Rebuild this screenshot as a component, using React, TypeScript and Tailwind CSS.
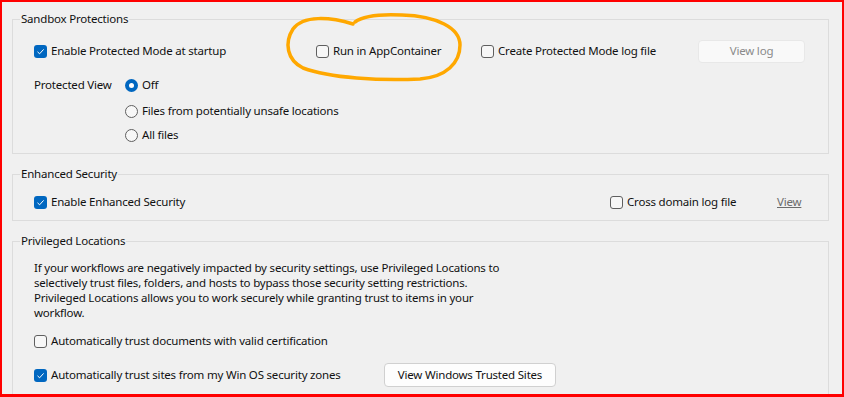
import React from 'react';

function Check({ checked }: { checked?: boolean }) {
    if (checked) {
        return (
            <span className="flex h-[13px] w-[13px] shrink-0 items-center justify-center rounded-[3px] bg-[#0067c0]">
                <svg width="9" height="9" viewBox="0 0 9 9">
                    <path d="M1.5 4.8 L3.6 6.8 L7.6 2.4" fill="none" stroke="#fff" strokeWidth="1" />
                </svg>
            </span>
        );
    }
    return <span className="h-[13px] w-[13px] shrink-0 rounded-[3px] border border-[#5f5f5f] bg-[#f7f7f7]" />;
}

function Radio({ checked }: { checked?: boolean }) {
    if (checked) {
        return (
            <span className="flex h-[13px] w-[13px] shrink-0 items-center justify-center rounded-full bg-[#0067c0]">
                <span className="h-[5px] w-[5px] rounded-full bg-white" />
            </span>
        );
    }
    return <span className="h-[13px] w-[13px] shrink-0 rounded-full border border-[#5f5f5f] bg-[#f7f7f7]" />;
}

function CheckRow({ label, checked }: { label: string; checked?: boolean }) {
    return (
        <div className="flex h-[20px] items-center gap-[4px]">
            <Check checked={checked} />
            <span>{label}</span>
        </div>
    );
}

function RadioRow({ label, checked }: { label: string; checked?: boolean }) {
    return (
        <div className="flex h-[20px] items-center gap-[4px]">
            <Radio checked={checked} />
            <span>{label}</span>
        </div>
    );
}

function Group({ title, className, children }: { title: string; className?: string; children: React.ReactNode }) {
    return (
        <fieldset className={'w-[817px] border border-[#dcdcdc] ' + (className ?? '')}>
            <legend className="ml-[7px] px-[1px] leading-[16px]">{title}</legend>
            {children}
        </fieldset>
    );
}

export default function App() {
    return (
        <div className="relative h-[397px] w-[844px] overflow-hidden">
            <div
                className="h-[397px] w-[844px] overflow-hidden border-2 border-b-[3px] border-[#ff0000] bg-[#f0f0f0] pl-[10px] pt-[9px] text-[11.5px] tracking-[-0.2px] text-[#111]"
                style={{ fontFamily: '"Noto Sans", sans-serif' }}
            >
                {/* Sandbox Protections */}
                <Group title="Sandbox Protections">
                    <div className="pb-[8px] pl-[21px] pt-[14px]">
                        <div className="flex h-[20px] items-center">
                            <div className="w-[282px]">
                                <CheckRow label="Enable Protected Mode at startup" checked />
                            </div>
                            <div className="w-[165px]">
                                <CheckRow label="Run in AppContainer" />
                            </div>
                            <div className="w-[217px]">
                                <CheckRow label="Create Protected Mode log file" />
                            </div>
                            <button className="h-[23px] w-[107px] rounded-[4px] border border-[#e8e8e8] bg-[#f9f9f9] text-[#8a8a8a]">
                                View log
                            </button>
                        </div>
                        <div className="mt-[14px] flex">
                            <div className="flex h-[20px] w-[91px] items-center">Protected View</div>
                            <div className="flex flex-col">
                                <RadioRow label="Off" checked />
                                <div className="mt-[6px]">
                                    <RadioRow label="Files from potentially unsafe locations" />
                                </div>
                                <div className="mt-[4px]">
                                    <RadioRow label="All files" />
                                </div>
                            </div>
                        </div>
                    </div>
                </Group>

                {/* Enhanced Security */}
                <Group title="Enhanced Security" className="mt-[12px]">
                    <div className="mb-[8px] mt-[10px] flex h-[20px] items-center pl-[21px]">
                        <div className="w-[576px]">
                            <CheckRow label="Enable Enhanced Security" checked />
                        </div>
                        <div className="w-[167px]">
                            <CheckRow label="Cross domain log file" />
                        </div>
                        <span className="text-[#6b6b6b] underline">View</span>
                    </div>
                </Group>

                {/* Privileged Locations */}
                <Group title="Privileged Locations" className="mt-[12px]">
                    <div className="pb-[30px] pl-[21px] pt-[11px]">
                        <p className="leading-[15px]">
                            If your workflows are negatively impacted by security settings, use Privileged Locations to
                            <br />
                            selectively trust files, folders, and hosts to bypass those security setting restrictions.
                            <br />
                            Privileged Locations allows you to work securely while granting trust to items in your
                            <br />
                            workflow.
                        </p>
                        <div className="mt-[11px]">
                            <CheckRow label="Automatically trust documents with valid certification" />
                        </div>
                        <div className="mt-[12px] flex h-[24px] items-center">
                            <div className="w-[350px]">
                                <CheckRow label="Automatically trust sites from my Win OS security zones" checked />
                            </div>
                            <button className="h-[24px] w-[172px] rounded-[4px] border border-[#d0d0d0] bg-[#fdfdfd] text-[#111]">
                                View Windows Trusted Sites
                            </button>
                        </div>
                    </div>
                </Group>
            </div>

            {/* hand-drawn highlight */}
            <svg className="pointer-events-none absolute left-0 top-0" width="844" height="397" viewBox="0 0 844 397">
                <path
                    d="M353 24 C 330 17, 303 15, 293 29 C 284 43, 287 60, 303 68 C 330 78, 380 81, 420 79 C 446 77, 460 63, 460 45 C 460 28, 437 16, 402 15 C 382 14, 363 16, 355 22"
                    fill="none"
                    stroke="#ffa800"
                    strokeWidth="3.5"
                    strokeLinecap="round"
                />
            </svg>
        </div>
    );
}
